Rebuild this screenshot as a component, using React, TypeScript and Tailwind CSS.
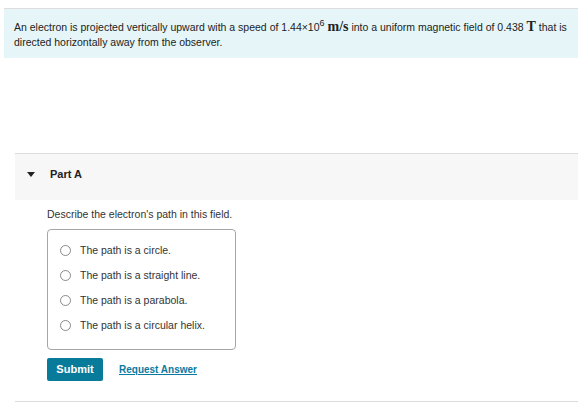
import React from "react";

const options = [
  "The path is a circle.",
  "The path is a straight line.",
  "The path is a parabola.",
  "The path is a circular helix.",
];

export default function App() {
  return (
    <div className="w-[578px] h-[403px] bg-white overflow-hidden text-[#222] [font-family:'Liberation_Sans',Arial,sans-serif]">
      <div className="h-[8px]" />
      <div className="ml-[4px] border-t border-[#dcdcdc] bg-[#e6f6f8] pl-[10px] pr-[8px] pt-[11px] pb-[8px] text-[10.5px] leading-[15px] text-[#222]">
        An electron is projected vertically upward with a speed of 1.44×10
        <span className="inline-block align-top text-[9px] leading-none relative top-[-1px]">6</span>{" "}
        <span className="[font-family:'Liberation_Serif',serif] text-[14px] leading-none font-bold">m/s</span> into a uniform magnetic field of 0.438{" "}
        <span className="[font-family:'Liberation_Serif',serif] text-[14px] leading-none font-bold">T</span> that is directed horizontally away from the observer.
      </div>
      <div className="h-[95px]" />
      <div className="ml-[15px] border-t border-[#dcdcdc] bg-[#f7f7f7] h-[47px] flex items-start pt-[12px]">
        <svg width="8" height="5" viewBox="0 0 8 5" className="ml-[12px] mr-[15px] mt-[6px]">
          <path d="M0 0 L8 0 L4 5 Z" fill="#222" />
        </svg>
        <span className="text-[11px] leading-[16px] font-bold text-[#222]">Part A</span>
      </div>
      <div className="ml-[47px] mt-[7px] text-[10.5px] text-[#333]">Describe the electron's path in this field.</div>
      <div className="ml-[47px] mt-[6px] w-[189px] h-[121px] border border-[#a6a6a6] rounded-[4px] pt-[13px] flex flex-col gap-[9px]">
        {options.map((o) => (
          <label key={o} className="flex items-center h-[16px]">
            <span className="ml-[12px] w-[11px] h-[11px] rounded-full border border-[#8a8a8a] bg-white" />
            <span className="ml-[9px] text-[10.5px] text-[#333]">{o}</span>
          </label>
        ))}
      </div>
      <div className="ml-[47px] mt-[8px] flex items-center">
        <button className="w-[56px] h-[23px] rounded-[2px] bg-[#087b9b] text-white text-[11px] font-bold">Submit</button>
        <a className="ml-[16px] text-[10px] font-bold text-[#0b7aa0] underline">Request Answer</a>
      </div>
      <div className="ml-[15px] mt-[20px] border-t border-[#dcdcdc]" />
    </div>
  );
}
